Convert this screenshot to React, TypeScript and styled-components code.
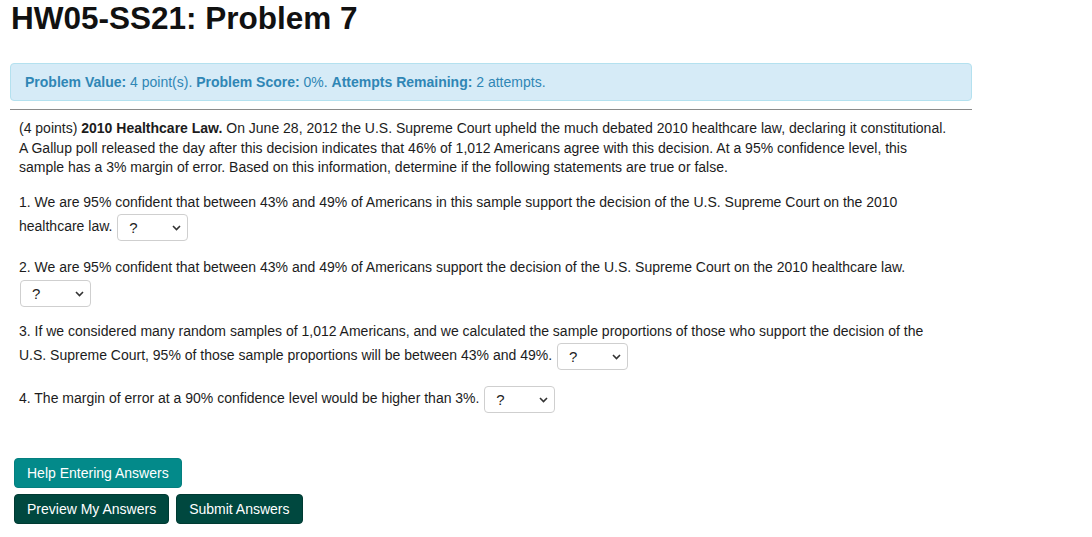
import React from "react";
import styled, { createGlobalStyle } from "styled-components";

const GlobalStyle = createGlobalStyle`
  body {
    margin: 0;
    background: #fff;
    font-family: "Liberation Sans", Arial, Helvetica, sans-serif;
    color: #1a1a1a;
  }
`;

const Page = styled.div`
  width: 962px;
  padding: 0 10px;
`;

const Title = styled.h1`
  margin: 0;
  padding: 0 0 0 1px;
  font-size: 31.5px;
  line-height: 36px;
  font-weight: bold;
  color: #111;
`;

const InfoBox = styled.div`
  margin-top: 27px;
  height: 36px;
  display: flex;
  align-items: center;
  padding: 0 14px;
  background: #d6ebf7;
  border: 1px solid #b4e1ef;
  border-radius: 4px;
  color: #2f86b5;
  font-size: 14px;

  b {
    font-weight: bold;
  }
`;

const Rule = styled.hr`
  margin: 8px 0 0;
  border: 0;
  border-top: 1px solid #8a8a8a;
  height: 0;
`;

const ProblemBody = styled.div`
  padding: 9px 9px 0 9px;
  font-size: 14px;
  line-height: 19.5px;
  color: #1c1c1c;
`;

const Para = styled.p<{ $gap?: number }>`
  margin: 0 0 ${(p) => p.$gap ?? 15}px;
`;

const SelectWrap = styled.span`
  position: relative;
  display: inline-block;
  vertical-align: middle;
  margin: 2px 0 2px 1px;
`;

const Select = styled.select`
  appearance: none;
  display: block;
  width: 71px;
  height: 27px;
  padding: 0 0 0 11px;
  border: 1px solid #cfcfcf;
  border-radius: 4px;
  background: #fff;
  font-family: "Liberation Sans", Arial, sans-serif;
  font-size: 15px;
  color: #222;
`;

const Chevron = styled.svg`
  position: absolute;
  right: 7px;
  top: 11px;
  pointer-events: none;
`;

const Actions = styled.div`
  display: flex;
  flex-direction: column;
  gap: 6px;
  padding: 43px 0 0 4px;
`;

const ButtonRow = styled.div`
  display: flex;
  gap: 7px;
`;

const Button = styled.button<{ $tone: "teal" | "dark" }>`
  height: 30px;
  padding: 0 12px;
  border: 1px solid ${(p) => (p.$tone === "teal" ? "#047f7f" : "#003a32")};
  border-radius: 4px;
  background: ${(p) => (p.$tone === "teal" ? "#038a8a" : "#00483f")};
  color: #fff;
  font-family: "Liberation Sans", Arial, sans-serif;
  font-size: 14px;
  cursor: pointer;
`;

function Answer() {
  return (
    <SelectWrap>
      <Select defaultValue="?">
        <option>?</option>
        <option>True</option>
        <option>False</option>
      </Select>
      <Chevron width="9" height="6" viewBox="0 0 9 6">
        <path d="M1 1l3.5 3.5L8 1" fill="none" stroke="#333" strokeWidth="1.6" />
      </Chevron>
    </SelectWrap>
  );
}

export default function App() {
  return (
    <>
      <GlobalStyle />
      <Page>
        <Title>HW05-SS21: Problem 7</Title>
        <InfoBox>
          <span>
            <b>Problem Value:</b> 4 point(s). <b>Problem Score:</b> 0%.{" "}
            <b>Attempts Remaining:</b> 2 attempts.
          </span>
        </InfoBox>
        <Rule />
        <ProblemBody>
          <Para>
            (4 points) <b>2010 Healthcare Law.</b> On June 28, 2012 the U.S.
            Supreme Court upheld the much debated 2010 healthcare law, declaring
            it constitutional.
            <br />A Gallup poll released the day after this decision indicates
            that 46% of 1,012 Americans agree with this decision. At a 95%
            confidence level, this
            <br />
            sample has a 3% margin of error. Based on this information,
            determine if the following statements are true or false.
          </Para>
          <Para>
            1. We are 95% confident that between 43% and 49% of Americans in
            this sample support the decision of the U.S. Supreme Court on the
            2010
            <br />
            healthcare law. <Answer />
          </Para>
          <Para $gap={13}>
            2. We are 95% confident that between 43% and 49% of Americans
            support the decision of the U.S. Supreme Court on the 2010
            healthcare law.
            <br />
            <Answer />
          </Para>
          <Para $gap={12}>
            3. If we considered many random samples of 1,012 Americans, and we
            calculated the sample proportions of those who support the decision
            of the
            <br />
            U.S. Supreme Court, 95% of those sample proportions will be between
            43% and 49%. <Answer />
          </Para>
          <Para $gap={0}>
            4. The margin of error at a 90% confidence level would be higher
            than 3%. <Answer />
          </Para>
        </ProblemBody>
        <Actions>
          <div>
            <Button $tone="teal">Help Entering Answers</Button>
          </div>
          <ButtonRow>
            <Button $tone="dark">Preview My Answers</Button>
            <Button $tone="dark">Submit Answers</Button>
          </ButtonRow>
        </Actions>
      </Page>
    </>
  );
}
